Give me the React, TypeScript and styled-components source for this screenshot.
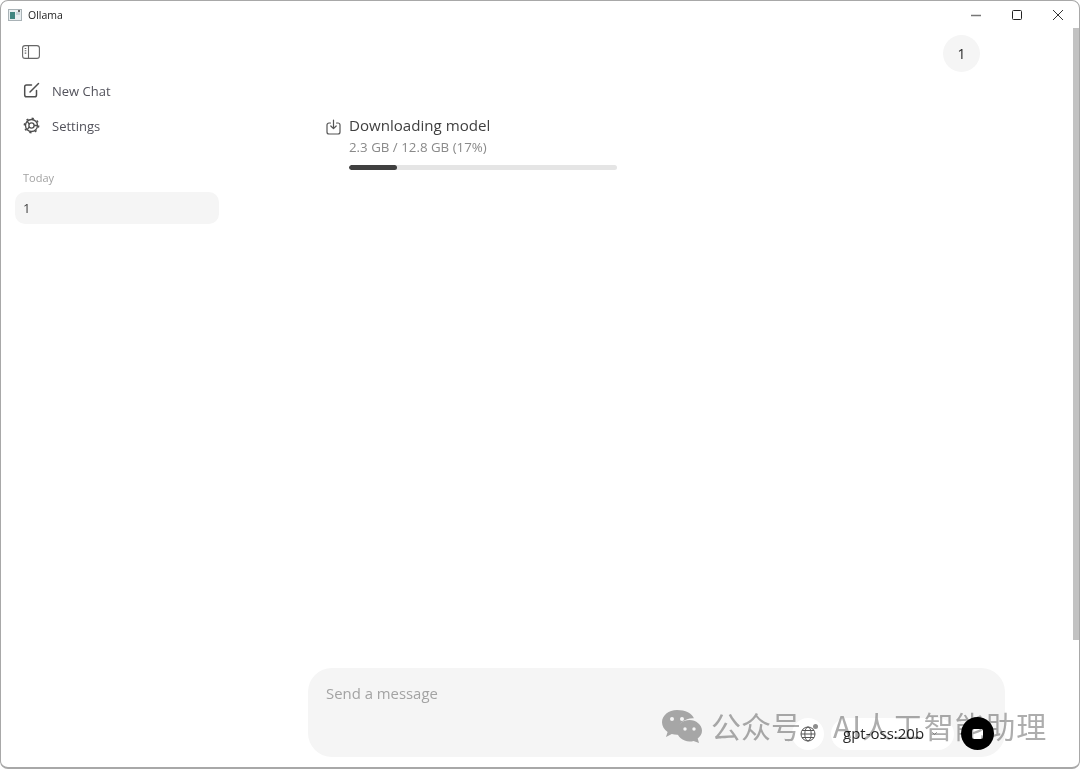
import React from 'react';
import styled, { createGlobalStyle } from 'styled-components';

const GlobalStyle = createGlobalStyle`
  html, body {
    margin: 0;
    padding: 0;
    background: #fff;
    overflow: hidden;
  }
  * { box-sizing: border-box; }
`;

const Window = styled.div`
  position: relative;
  width: 1080px;
  height: 769px;
  display: flex;
  flex-direction: column;
  background: #fff;
  border: 1px solid #a8a8a8;
  border-bottom-width: 2px;
  border-radius: 8px;
  overflow: hidden;
  font-family: "Open Sans", "Noto Sans", sans-serif;
`;

const TitleBar = styled.div`
  height: 27px;
  flex: none;
  display: flex;
  align-items: center;
  padding-left: 7px;
`;

const AppName = styled.span`
  margin-left: 6px;
  font-size: 10.5px;
  color: #1c1c1c;
`;

const WindowButtons = styled.div`
  margin-left: auto;
  padding-right: 1px;
  display: flex;
`;

const WindowButton = styled.div`
  width: 41px;
  height: 27px;
  display: flex;
  align-items: center;
  justify-content: center;
`;

const Body = styled.div`
  flex: 1;
  display: flex;
  min-height: 0;
`;

const Sidebar = styled.aside`
  width: 233px;
  flex: none;
  display: flex;
  flex-direction: column;
  padding: 15px 15px 0 14px;
`;

const ToggleButton = styled.div`
  height: 18px;
  padding-left: 7px;
  display: flex;
  align-items: center;
  margin-bottom: 12px;
`;

const NavItem = styled.div`
  height: 35px;
  display: flex;
  align-items: center;
  gap: 12px;
  padding-left: 8px;
  font-size: 13px;
  color: #52525b;
`;

const SectionLabel = styled.div`
  margin-top: 27px;
  padding-left: 8px;
  font-size: 11px;
  line-height: 16px;
  color: #a3a3a3;
`;

const ChatItem = styled.div`
  margin-top: 6px;
  height: 32px;
  display: flex;
  align-items: center;
  padding-left: 8px;
  border-radius: 10px;
  background: #f5f5f5;
  font-size: 13px;
  color: #404040;
`;

const Main = styled.main`
  flex: 1;
  display: flex;
  flex-direction: column;
  padding: 7px 74px 10px 74px;
`;

const TopRow = styled.div`
  display: flex;
  justify-content: flex-end;
  padding-right: 25px;
`;

const Avatar = styled.div`
  width: 37px;
  height: 37px;
  border-radius: 50%;
  background: #f5f5f5;
  display: flex;
  align-items: center;
  justify-content: center;
  font-size: 14px;
  color: #262626;
`;

const Download = styled.div`
  margin-top: 43px;
  margin-left: 18px;
  display: flex;
  gap: 8px;
  flex: 1;
`;

const DownloadIcon = styled.div`
  padding-top: 3px;
`;

const DownloadInfo = styled.div`
  width: 268px;
`;

const DownloadTitle = styled.div`
  font-size: 15.1px;
  line-height: 20px;
  color: #404040;
`;

const DownloadSize = styled.div`
  margin-top: 4px;
  font-size: 13.3px;
  line-height: 17px;
  color: #8a8a8a;
`;

const ProgressTrack = styled.div`
  margin-top: 9px;
  height: 5px;
  border-radius: 3px;
  background: #e5e5e5;
  overflow: hidden;
`;

const ProgressFill = styled.div<{ $value: number }>`
  width: ${p => p.$value}%;
  height: 100%;
  border-radius: 3px;
  background: #404040;
`;

const Composer = styled.div`
  height: 89px;
  flex: none;
  display: flex;
  flex-direction: column;
  justify-content: space-between;
  padding: 15px 11px 7px 18px;
  border-radius: 24px;
  background: #f5f5f5;
`;

const Placeholder = styled.div`
  font-size: 14.9px;
  line-height: 20px;
  color: #a3a3a3;
`;

const ComposerActions = styled.div`
  display: flex;
  justify-content: flex-end;
  align-items: center;
`;

const GlobeButton = styled.div`
  width: 32px;
  height: 32px;
  border-radius: 50%;
  background: #fff;
  display: flex;
  align-items: center;
  justify-content: center;
  margin-right: 7px;
`;

const ModelPicker = styled.div`
  width: 123px;
  height: 32px;
  border-radius: 16px;
  background: #fff;
  display: flex;
  align-items: center;
  gap: 7px;
  padding: 0 0 1px 12px;
  margin-right: 7px;
  font-size: 15px;
  color: #262626;
  white-space: nowrap;
`;

const StopButton = styled.div`
  width: 33px;
  height: 33px;
  border-radius: 50%;
  background: #000;
  display: flex;
  align-items: center;
  justify-content: center;
`;

const StopSquare = styled.div`
  width: 11px;
  height: 10px;
  border-radius: 2px;
  background: #fff;
`;

const ScrollThumb = styled.div`
  position: absolute;
  top: 27px;
  right: 0;
  width: 6px;
  height: 612px;
  background: #c2c2c2;
`;

const Watermark = styled.div`
  position: absolute;
  left: 660px;
  top: 705px;
  display: flex;
  align-items: center;
  font-family: "Noto Sans CJK SC", sans-serif;
  font-size: 30px;
  line-height: 38px;
  color: #adadad;
  white-space: nowrap;
  pointer-events: none;
  mix-blend-mode: multiply;
`;

const WatermarkName = styled.span`
  margin: 0 0 2px 8px;
`;

const WatermarkDot = styled.span`
  width: 5px;
  height: 5px;
  border-radius: 50%;
  background: #8d8d8d;
  margin: 0 15px 0 12px;
`;

const WatermarkTitle = styled.span`
  margin-bottom: 2px;
  letter-spacing: 0.9px;
`;

const WeChatMark = () => (
  <svg width="42" height="34" viewBox="0 0 42 34" fill="#adadad">
    <path d="M16 1C7.700 1 1 6.500 1 13.300c0 3.900 2.200 7.300 5.600 9.600L5 28l5.800-3c1.700.5 3.400.8 5.200.8.500 0 1 0 1.500-.1-.4-1.200-.6-2.400-.6-3.700 0-7.100 6.700-12.800 15-12.800h1C31.300 4.400 24.300 1 16 1z" />
    <path d="M41 21.800c0-5.900-5.900-10.700-12.500-10.700S16 15.900 16 21.800s5.900 10.700 12.500 10.700c1.400 0 2.800-.2 4.100-.6L38 34l-1.300-4.600c2.700-1.900 4.300-4.600 4.300-7.600z" />
    <circle cx="11" cy="10" r="2" fill="#fff" />
    <circle cx="21" cy="10" r="2" fill="#fff" />
    <circle cx="24" cy="20" r="1.700" fill="#fff" />
    <circle cx="33" cy="20" r="1.700" fill="#fff" />
  </svg>
);

const App: React.FC = () => {
  return (
    <>
      <GlobalStyle />
      <Window>
        <TitleBar>
          <svg width="14" height="12" viewBox="0 0 14 12">
            <rect x="0.500" y="0.500" width="13" height="11" fill="#e8eef0" stroke="#a9b2b6" />
            <rect x="2" y="3" width="5" height="7" fill="#3f8580" />
            <rect x="8" y="3" width="4" height="3" fill="#c9d6da" />
            <rect x="10" y="1" width="2" height="2" fill="#666" />
          </svg>
          <AppName>Ollama</AppName>
          <WindowButtons>
            <WindowButton>
              <svg width="10" height="10" viewBox="0 0 10 10"><path d="M0 5.500h10" stroke="#777" strokeWidth="1.400" /></svg>
            </WindowButton>
            <WindowButton>
              <svg width="10" height="10" viewBox="0 0 10 10"><rect x="0.500" y="0.500" width="9" height="9" rx="1" fill="none" stroke="#222" /></svg>
            </WindowButton>
            <WindowButton>
              <svg width="10" height="10" viewBox="0 0 10 10"><path d="M0 0l10 10M10 0L0 10" stroke="#333" /></svg>
            </WindowButton>
          </WindowButtons>
        </TitleBar>
        <Body>
          <Sidebar>
            <ToggleButton>
              <svg width="18" height="14" viewBox="0 0 18 14" fill="none" stroke="#666" strokeWidth="1.100">
                <rect x="0.600" y="0.600" width="16.800" height="12.800" rx="2.500" />
                <path d="M6.500 0.600v12.800" />
                <path d="M2.700 3.500h1.600M2.700 5.800h1.600M2.700 8.100h1.600" />
              </svg>
            </ToggleButton>
            <NavItem>
              <svg width="17" height="17" viewBox="0 0 17 17" fill="none" stroke="#4f4f4f" strokeWidth="1.500" strokeLinecap="round">
                <path d="M8.500 3H3.500A1.800 1.800 0 0 0 1.700 4.800v8.200A1.800 1.800 0 0 0 3.500 14.800h8.200a1.800 1.800 0 0 0 1.800-1.800V8.500" />
                <path d="M7 10L15.500 1.500" />
              </svg>
              New Chat
            </NavItem>
            <NavItem>
              <svg width="17" height="17" viewBox="0 0 17 17" fill="none" stroke="#4f4f4f" strokeWidth="1.300">
                <circle cx="8.500" cy="8.500" r="6" />
                <circle cx="8.500" cy="8.500" r="7.200" strokeWidth="1.400" strokeDasharray="2.200 3.450" />
                <circle cx="8.500" cy="8.500" r="2.600" />
                <path d="M6.300 7.200L4 4.200M6.300 9.800L4 12.800M11.100 8.500h3.300" />
              </svg>
              Settings
            </NavItem>
            <SectionLabel>Today</SectionLabel>
            <ChatItem>1</ChatItem>
          </Sidebar>
          <Main>
            <TopRow>
              <Avatar>1</Avatar>
            </TopRow>
            <Download>
              <DownloadIcon>
                <svg width="15" height="16" viewBox="0 0 15 16" fill="none" stroke="#555" strokeWidth="1.200" strokeLinecap="round" strokeLinejoin="round">
                  <path d="M4.500 4H3A2 2 0 0 0 1 6v7a2 2 0 0 0 2 2h9a2 2 0 0 0 2-2V6a2 2 0 0 0-2-2h-1.500" />
                  <path d="M7.500 1v8.500M4.800 7l2.700 2.700L10.200 7" />
                </svg>
              </DownloadIcon>
              <DownloadInfo>
                <DownloadTitle>Downloading model</DownloadTitle>
                <DownloadSize>2.3 GB / 12.8 GB (17%)</DownloadSize>
                <ProgressTrack>
                  <ProgressFill $value={18} />
                </ProgressTrack>
              </DownloadInfo>
            </Download>
            <Composer>
              <Placeholder>Send a message</Placeholder>
              <ComposerActions>
                <GlobeButton>
                  <svg width="16" height="16" viewBox="0 0 16 16" fill="none" stroke="#555" strokeWidth="1">
                    <circle cx="8" cy="8" r="7" />
                    <ellipse cx="8" cy="8" rx="3.200" ry="7" />
                    <path d="M1 8h14M2 4.500h12M2 11.500h12" />
                  </svg>
                </GlobeButton>
                <ModelPicker>
                  gpt-oss:20b
                  <svg width="7" height="5" viewBox="0 0 7 5" fill="none" stroke="#aaa" strokeWidth="1"><path d="M1 1l2.500 2.500L6 1" /></svg>
                </ModelPicker>
                <StopButton>
                  <StopSquare />
                </StopButton>
              </ComposerActions>
            </Composer>
          </Main>
        </Body>
        <ScrollThumb />
        <Watermark>
          <WeChatMark />
          <WatermarkName>公众号</WatermarkName>
          <WatermarkDot />
          <WatermarkTitle>AI人工智能助理</WatermarkTitle>
        </Watermark>
      </Window>
    </>
  );
};

export default App;
